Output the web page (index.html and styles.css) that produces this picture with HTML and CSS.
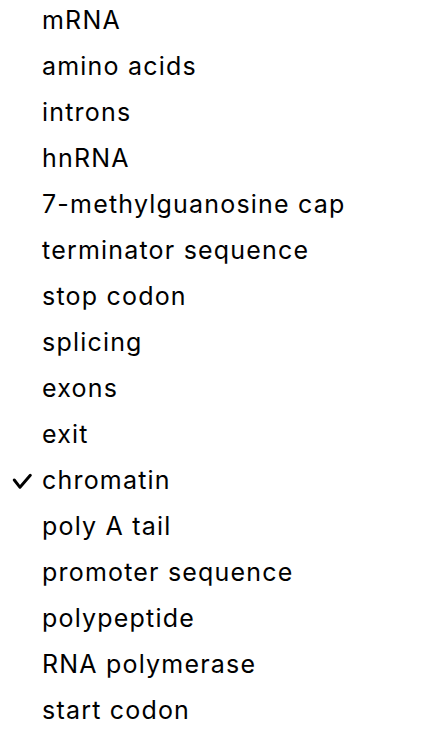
FILE: index.html
```html
<!DOCTYPE html>
<html lang="en">
<head>
    <meta charset="UTF-8">
    <meta name="viewport" content="width=device-width, initial-scale=1.0">
    <title>Select term</title>
    <link rel="stylesheet" href="styles.css">
</head>
<body>
    <ul class="menu">
        <li class="menu-item">mRNA</li>
        <li class="menu-item">amino acids</li>
        <li class="menu-item">introns</li>
        <li class="menu-item">hnRNA</li>
        <li class="menu-item">7-methylguanosine cap</li>
        <li class="menu-item">terminator sequence</li>
        <li class="menu-item">stop codon</li>
        <li class="menu-item">splicing</li>
        <li class="menu-item">exons</li>
        <li class="menu-item">exit</li>
        <li class="menu-item selected">
            <svg class="check" viewBox="0 0 20 17" width="20" height="17">
                <path d="M2.3 7 L8 14.3 L18.3 2.3" fill="none" stroke="#000" stroke-width="2.9" stroke-linecap="round" stroke-linejoin="round"/>
            </svg>
            chromatin
        </li>
        <li class="menu-item">poly A tail</li>
        <li class="menu-item">promoter sequence</li>
        <li class="menu-item">polypeptide</li>
        <li class="menu-item">RNA polymerase</li>
        <li class="menu-item">start codon</li>
    </ul>
</body>
</html>
```

FILE: styles.css
```css
body {
    margin: 0;
    background: #fff;
    font-family: Inter, "Liberation Sans", sans-serif;
    color: #000;
}

.menu {
    list-style: none;
    margin: -3px 0 0;
    padding: 0;
}

.menu-item {
    position: relative;
    height: 46px;
    line-height: 46px;
    padding-left: 42px;
    font-size: 25px;
    letter-spacing: 1.2px;
}

/* tick beside the chosen entry */
.check {
    position: absolute;
    left: 12px;
    top: 16px;
}
```
